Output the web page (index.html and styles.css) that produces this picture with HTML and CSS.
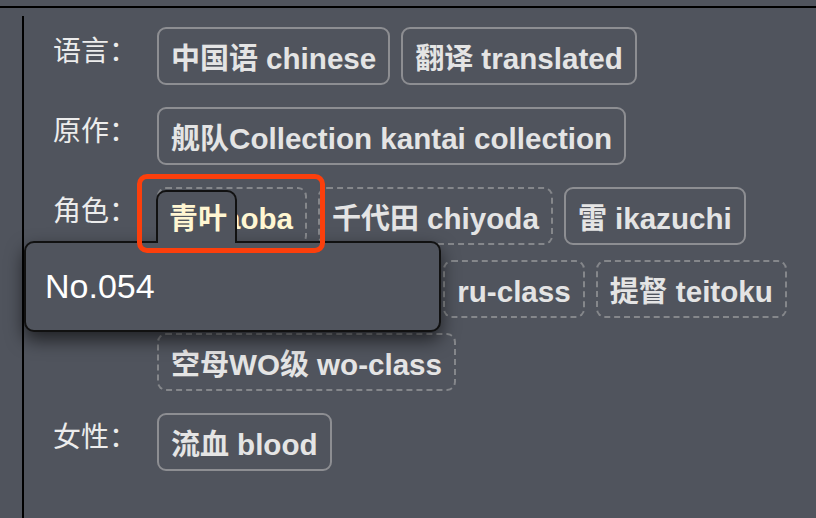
FILE: index.html
```html
<!DOCTYPE html>
<html lang="zh-CN">
<head>
<meta charset="utf-8">
<title>Tags</title>
<link rel="stylesheet" href="styles.css">
</head>
<body>
<div class="page">
  <div class="rule"></div>
  <section class="panel">
    <div class="row">
      <div class="label">语言：</div>
      <div class="tags">
        <a class="tag"><span class="txt">中国语 <span class="en">chinese</span></span></a>
        <a class="tag"><span class="txt">翻译 <span class="en">translated</span></span></a>
      </div>
    </div>
    <div class="row">
      <div class="label">原作：</div>
      <div class="tags">
        <a class="tag"><span class="txt">舰队<span class="en">Collection kantai collection</span></span></a>
      </div>
    </div>
    <div class="row">
      <div class="label">角色：</div>
      <div class="tags">
        <span class="anchor">
          <a class="tag dashed active"><span class="txt">青叶 <span class="en">aoba</span></span></a>
          <div class="tooltip">
            <div class="tab">青叶</div>
            No.054
          </div>
          <div class="highlight"></div>
        </span>
        <a class="tag dashed"><span class="txt">千代田 <span class="en">chiyoda</span></span></a>
        <a class="tag"><span class="txt">雷 <span class="en">ikazuchi</span></span></a>
        <a class="tag dashed"><span class="txt">战舰RE级 <span class="en">re-class</span></span></a>
        <a class="tag dashed"><span class="txt"><span class="en">ru-class</span></span></a>
        <a class="tag dashed"><span class="txt">提督 <span class="en">teitoku</span></span></a>
        <a class="tag dashed"><span class="txt">空母<span class="en">WO</span>级 <span class="en">wo-class</span></span></a>
      </div>
    </div>
    <div class="row">
      <div class="label">女性：</div>
      <div class="tags">
        <a class="tag"><span class="txt">流血 <span class="en">blood</span></span></a>
      </div>
    </div>
  </section>
</div>
</body>
</html>
```
FILE: styles.css
```css
html, body {
  margin: 0;
  padding: 0;
  background: #50545d;
}

.page {
  padding-top: 6px;
  height: 518px;
  box-sizing: border-box;
  overflow: hidden;
}

.rule {
  height: 2px;
  background: #000;
}

.panel {
  margin: 8px 0 0 22px;
  border-left: 2px solid #000;
  padding: 11px 20px 0 29px;
  height: 510px;
  box-sizing: border-box;
  display: flex;
  flex-direction: column;
  gap: 22px;
}

.row {
  display: flex;
  align-items: flex-start;
}

.label {
  flex: 0 0 104px;
  font: 400 28px/45px "Noto Sans CJK SC", sans-serif;
  color: #ececec;
}

.tags {
  flex: 1;
  display: flex;
  flex-wrap: wrap;
  gap: 15px 11px;
}

.tag {
  display: flex;
  box-sizing: border-box;
  height: 58px;
  padding: 6px 12px 0;
  border: 2px solid #8d8e92;
  border-radius: 9px;
  font: 700 29px/48px "Liberation Sans", "Noto Sans CJK SC", sans-serif;
  color: #e4e4e4;
  white-space: nowrap;
}

.txt {
  flex: none;
}

.tag .en {
  font-size: 29.6px;
}

.tag.dashed {
  border-style: dashed;
  border-color: #85878b;
}

.tag.active {
  width: 150px;
  justify-content: flex-end;
  overflow: hidden;
  color: #fff6d2;
}

.anchor {
  position: relative;
  display: flex;
}

.tooltip {
  position: absolute;
  left: -133px;
  top: 54px;
  width: 417px;
  height: 91px;
  box-sizing: border-box;
  border: 2px solid #111;
  border-radius: 10px;
  background: #50545d;
  box-shadow: 0 8px 18px rgba(0, 0, 0, 0.6);
  padding: 23px 20px 0 19px;
  font: 400 34px/40px "Liberation Sans", sans-serif;
  color: #fff;
  z-index: 2;
}

.tab {
  position: absolute;
  left: 130px;
  top: -53px;
  width: 81px;
  height: 53px;
  box-sizing: border-box;
  border: 2px solid #111;
  border-bottom: none;
  border-radius: 10px 10px 0 0;
  background: #50545d;
  padding: 3px 0 0 11px;
  font: 700 29px/48px "Liberation Sans", "Noto Sans CJK SC", sans-serif;
  color: #fff6d2;
  white-space: nowrap;
}

.highlight {
  position: absolute;
  left: -20px;
  top: -13px;
  width: 188px;
  height: 79px;
  box-sizing: border-box;
  border: 5px solid #fc3f0c;
  border-radius: 10px;
  z-index: 3;
  pointer-events: none;
}
```
